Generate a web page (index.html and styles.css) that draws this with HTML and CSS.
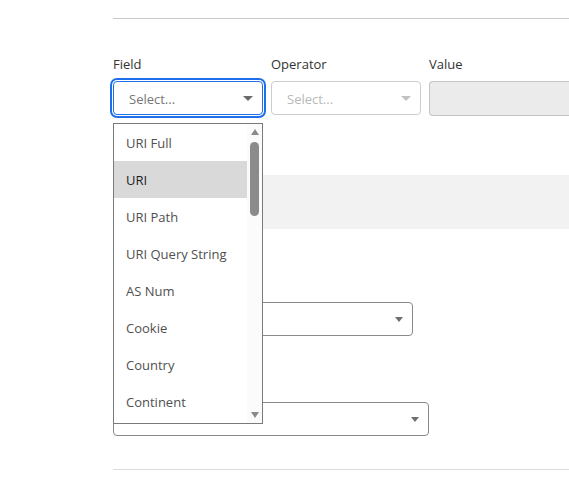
FILE: index.html
```html
<!DOCTYPE html>
<html lang="en">
<head>
<meta charset="utf-8">
<title>Filter</title>
<link rel="stylesheet" href="styles.css">
</head>
<body>
<div class="page">
  <div class="rule rule-top"></div>

  <div class="filter-row">
    <div class="col col-field">
      <label class="label">Field</label>
      <div class="select-wrap">
        <div class="select select-focus">
          <span class="placeholder">Select...</span>
          <span class="caret"></span>
        </div>
        <div class="dropdown">
          <ul class="options">
            <li class="option">URI Full</li>
            <li class="option is-active">URI</li>
            <li class="option">URI Path</li>
            <li class="option">URI Query String</li>
            <li class="option">AS Num</li>
            <li class="option">Cookie</li>
            <li class="option">Country</li>
            <li class="option">Continent</li>
          </ul>
          <div class="scrollbar">
            <span class="sb-arrow sb-up"></span>
            <span class="sb-thumb"></span>
            <span class="sb-arrow sb-down"></span>
          </div>
        </div>
      </div>
    </div>
    <div class="col col-operator">
      <label class="label">Operator</label>
      <div class="select select-disabled">
        <span class="placeholder">Select...</span>
        <span class="caret"></span>
      </div>
    </div>
    <div class="col col-value">
      <label class="label">Value</label>
      <div class="input-disabled"></div>
    </div>
  </div>

  <div class="band"></div>

  <div class="select select-back select-mid">
    <span class="caret caret-small"></span>
  </div>

  <div class="select select-back select-wide">
    <span class="caret caret-small"></span>
  </div>

  <div class="rule rule-bottom"></div>
</div>
</body>
</html>
```

FILE: styles.css
```css
html, body {
  margin: 0;
  padding: 0;
  background: #ffffff;
  overflow: hidden;
}

body {
  font-family: "Open Sans", "Noto Sans", sans-serif;
  font-size: 13px;
  color: #333333;
}

.page {
  padding: 18px 0 0 113px;
  width: 456px;
}

.rule {
  height: 1px;
}

.rule-top {
  background: #c9c9c9;
}

.rule-bottom {
  background: #dcdcdc;
  margin-top: 33px;
}

.filter-row {
  display: flex;
  margin-top: 36px;
  gap: 8px;
}

.col {
  display: flex;
  flex-direction: column;
}

.col-field,
.col-operator {
  width: 150px;
  flex: none;
}

.col-value {
  flex: 1;
  min-width: 0;
}

.label {
  display: block;
  height: 18px;
  line-height: 18px;
  margin-bottom: 8px;
  color: #333333;
}

.select-wrap {
  position: relative;
}

.select {
  box-sizing: border-box;
  height: 34px;
  border: 1px solid #8a8a8a;
  border-radius: 4px;
  display: flex;
  align-items: center;
  justify-content: space-between;
  padding: 1px 9px 0 15px;
  background: #ffffff;
}

.select-focus {
  border-color: #1f6feb;
  box-shadow: 0 0 0 1px #ffffff, 0 0 0 3px #1f6feb;
}

.placeholder {
  color: #767676;
}

.select-disabled {
  border-color: #cccccc;
}

.select-disabled .placeholder {
  color: #b9b9b9;
}

.caret {
  width: 0;
  height: 0;
  border-left: 5px solid transparent;
  border-right: 5px solid transparent;
  border-top: 5px solid #6b6b6b;
}

.select-disabled .caret {
  border-top-color: #c2c2c2;
}

.caret-small {
  border-left-width: 4px;
  border-right-width: 4px;
  border-top: 5px solid #6f6f6f;
  margin-left: auto;
}

.input-disabled {
  box-sizing: border-box;
  height: 35px;
  width: 100%;
  background: #ebebeb;
  border: 1px solid #c4c4c4;
  border-right: none;
  border-radius: 4px 0 0 4px;
}

/* Dropdown overlay */
.dropdown {
  position: absolute;
  top: calc(100% + 8px);
  left: 0;
  width: 150px;
  height: 301px;
  box-sizing: border-box;
  border: 1px solid #7a7a7a;
  background: #ffffff;
  display: flex;
  overflow: hidden;
  z-index: 10;
}

.options {
  list-style: none;
  margin: 0;
  padding: 0;
  flex: 1;
}

.option {
  box-sizing: border-box;
  height: 37px;
  line-height: 37px;
  padding: 1px 0 0 12px;
  color: #505050;
  white-space: nowrap;
}

.option.is-active {
  background: #d9d9d9;
  color: #1e1e1e;
}

.scrollbar {
  width: 15px;
  flex: none;
  background: #fbfbfb;
  position: relative;
}

.sb-arrow {
  position: absolute;
  left: 4px;
  width: 0;
  height: 0;
  border-left: 4px solid transparent;
  border-right: 4px solid transparent;
}

.sb-up {
  top: 5px;
  border-bottom: 6px solid #8a8a8a;
}

.sb-down {
  bottom: 5px;
  border-top: 6px solid #8a8a8a;
}

.sb-thumb {
  position: absolute;
  top: 18px;
  left: 3px;
  width: 9px;
  height: 74px;
  border-radius: 5px;
  background: #8b8b8b;
}

/* Background content */
.band {
  height: 54px;
  margin-top: 59px;
  background: #f2f2f2;
}

.select-back {
  padding: 0 9px 0 15px;
}

.select-mid {
  width: 300px;
  margin-top: 73px;
}

.select-wide {
  width: 316px;
  margin-top: 66px;
}
```
